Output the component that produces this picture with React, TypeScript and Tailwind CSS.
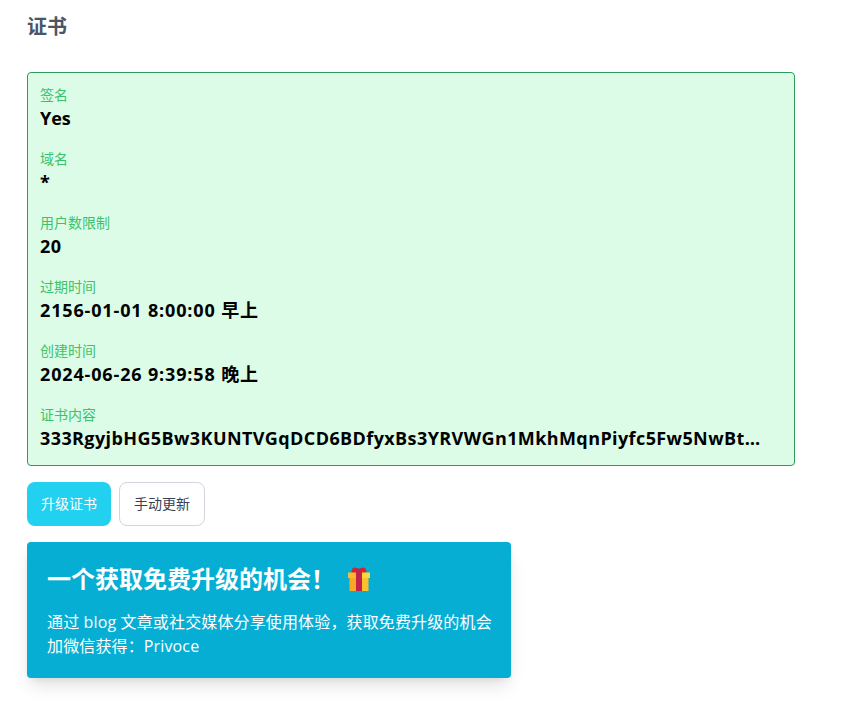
import React from 'react'

const rows = [
  { label: '签名', value: 'Yes', spacing: 'tracking-[0px]' },
  { label: '域名', value: '*', spacing: 'tracking-[0px]' },
  { label: '用户数限制', value: '20', spacing: 'tracking-[0.5px]' },
  { label: '过期时间', value: '2156-01-01 8:00:00 早上', spacing: 'tracking-[0.85px]' },
  { label: '创建时间', value: '2024-06-26 9:39:58 晚上', spacing: 'tracking-[0.85px]' },
  {
    label: '证书内容',
    value:
      '333RgyjbHG5Bw3KUNTVGqDCD6BDfyxBs3YRVWGn1MkhMqnPiyfc5Fw5NwBtK8sLdQ2xVpTzR7eHmYc4A',
    spacing: 'tracking-[0.4px]',
  },
]

const GiftIcon = () => (
  <svg className="w-[24px] h-[26px] shrink-0" viewBox="0 0 24 26">
    <path d="M5 3.500C6.500 .5 10 1 12 4c2-3 5.500-3.500 7-.5 1 2 .3 3.500-.7 4H5.700C4.700 7 4 5.500 5 3.500z" fill="#d3272f" />
    <rect x="1" y="6.500" width="11" height="5.500" fill="#fbb92d" />
    <rect x="12" y="6.500" width="11" height="5.500" fill="#fdd835" />
    <rect x="2.500" y="12" width="9.500" height="13" fill="#f9a825" />
    <rect x="12" y="12" width="9.500" height="13" fill="#fbc02d" />
    <rect x="9" y="2.500" width="6" height="22.500" fill="#c2234a" />
  </svg>
)

export default function App() {
  return (
    <div className="min-h-screen bg-white pl-[27px] pt-[13px] font-['Open_Sans','Noto_Sans_CJK_SC',sans-serif]">
      <h2 className="text-xl leading-7 font-bold text-gray-600">证书</h2>

      {/* Certificate details */}
      <div className="mt-[31px] w-[768px] flex flex-col gap-4 rounded border border-[#2a9d57] bg-[#dcfce7] p-3">
        {rows.map((row) => (
          <div key={row.label}>
            <div className="text-sm leading-5 text-[#3cc16c]">{row.label}</div>
            <div className={`truncate pr-[10px] text-lg leading-[26px] pb-[2px] font-bold text-black ${row.spacing}`}>{row.value}</div>
          </div>
        ))}
      </div>

      <div className="mt-4 flex gap-2">
        <button className="h-11 w-[84px] rounded-lg bg-[#22d0ef] text-sm text-white">升级证书</button>
        <button className="h-11 w-[86px] rounded-lg border border-gray-300 bg-white text-sm text-gray-700">手动更新</button>
      </div>

      {/* Free upgrade notice */}
      <div className="mt-4 w-[484px] rounded bg-[#07aed4] pl-5 pr-4 pt-[19px] pb-5 text-white shadow-[0_10px_18px_-3px_rgba(0,0,0,0.12),0_4px_8px_-4px_rgba(0,0,0,0.1)]">
        <div className="flex items-center gap-3">
          <h3 className="text-2xl leading-[36px] font-bold">一个获取免费升级的机会！</h3>
          <GiftIcon />
        </div>
        <p className="mt-[13px] whitespace-nowrap text-base leading-6 tracking-[0.14px]">
          通过 blog 文章或社交媒体分享使用体验，获取免费升级的机会
          <br />
          加微信获得：Privoce
        </p>
      </div>
    </div>
  )
}
